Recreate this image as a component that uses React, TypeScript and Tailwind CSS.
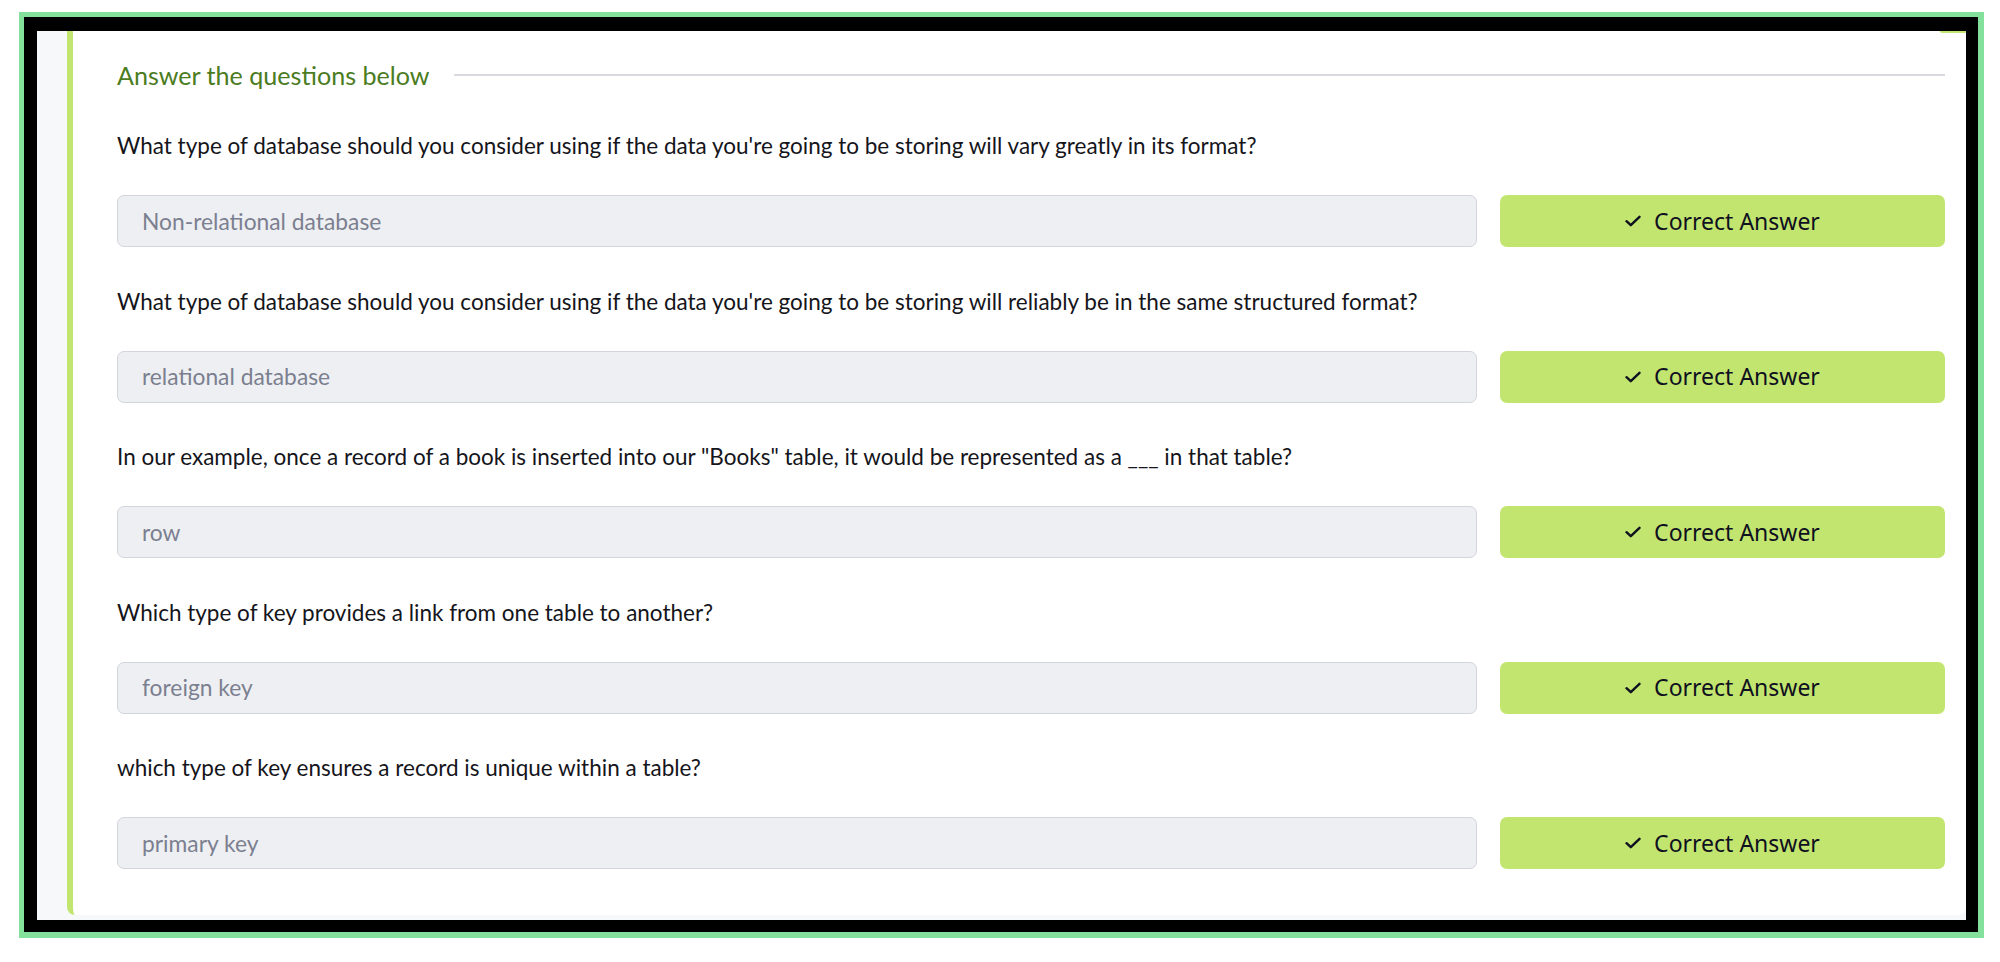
import React from "react";

const rows = [
  {
    q: "What type of database should you consider using if the data you're going to be storing will vary greatly in its format?",
    a: "Non-relational database",
  },
  {
    q: "What type of database should you consider using if the data you're going to be storing will reliably be in the same structured format?",
    a: "relational database",
  },
  {
    q: 'In our example, once a record of a book is inserted into our "Books" table, it would be represented as a ___ in that table?',
    a: "row",
  },
  {
    q: "Which type of key provides a link from one table to another?",
    a: "foreign key",
  },
  {
    q: "which type of key ensures a record is unique within a table?",
    a: "primary key",
  },
];

function Check() {
  return (
    <svg width="16" height="12" viewBox="0 0 16 12" fill="none" className="shrink-0">
      <path d="M1.5 6.2 L5.8 10.2 L14.5 1.8" stroke="#0f1020" strokeWidth="2.4" strokeLinecap="round" strokeLinejoin="round" />
    </svg>
  );
}

export default function App() {
  return (
    <div className="w-[2000px] h-[962px] bg-white pt-[12px] pl-[19px] overflow-hidden">
      <div className="w-[1965px] h-[926px] border-t-[5px] border-l-[5px] border-r-[6px] border-b-[6px] border-[#84e19b]">
        <div className="w-full h-full border-t-[14px] border-l-[13px] border-r-[12px] border-b-[12px] border-black bg-[#f7f8fa] pl-[30px] pb-[5px] overflow-hidden">
          <div className="h-full bg-white border-l-[6px] border-[#c2e56f] rounded-bl-[8px] rounded-br-[8px] pl-[44px] pr-[21px] flex flex-col font-['Lato',sans-serif]">
            <div className="flex justify-end -mr-[21px]">
              <div className="w-[26px] h-[2px] bg-[#c2e56f] rounded-bl-[2px]" />
            </div>
            <div className="mt-[24px] h-[36px] flex items-center gap-[25px]">
              <h2 className="text-[25.1px] leading-[36px] text-[#4b7c1f] whitespace-nowrap">Answer the questions below</h2>
              <div className="flex-1 h-[2px] bg-[#d9dadf]" />
            </div>
            <div className="mt-[37px] flex flex-col gap-[38.5px]">
              {rows.map((r, i) => (
                <div key={i} className="flex flex-col gap-[33px]">
                  <p className="text-[22.5px] leading-[32px] text-[#15151b] whitespace-nowrap">{r.q}</p>
                  <div className="flex gap-[23px]">
                    <div className="flex-1 h-[52px] rounded-[7px] border border-[#d3d5dc] bg-[#eeeff2] pl-[24px] flex items-center text-[22.8px] text-[#7b7f90]">
                      {r.a}
                    </div>
                    <div className="w-[445px] h-[52px] rounded-[7px] bg-[#c2e56f] flex items-center justify-center gap-[13px] text-[#0f1020] font-['Noto_Sans',sans-serif] text-[23px]">
                      <Check />
                      <span>Correct Answer</span>
                    </div>
                  </div>
                </div>
              ))}
            </div>
          </div>
        </div>
      </div>
    </div>
  );
}
